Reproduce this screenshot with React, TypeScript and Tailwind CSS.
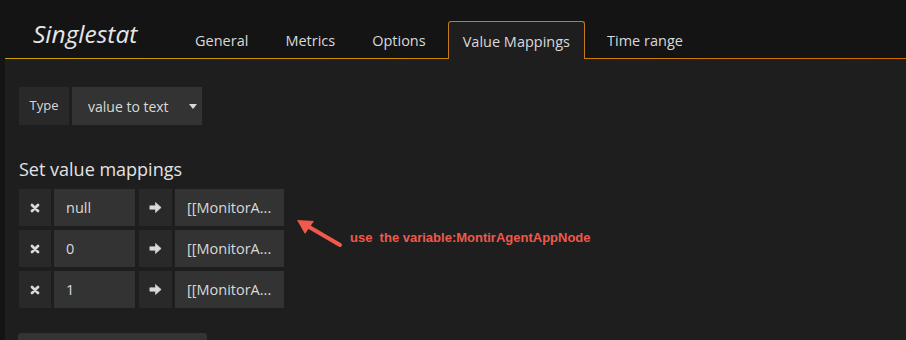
import React from 'react';

const tabs = ['General', 'Metrics', 'Options', 'Value Mappings', 'Time range'];
const mappings = ['null', '0', '1'];

const Arrow = () => (
  <svg width="13" height="13" viewBox="0 0 12 12" className="text-[#d8d9da]">
    <path d="M0.8 4.4h5.2V1.3L11.2 6 6 10.7V7.6H0.8z" fill="currentColor" strokeLinejoin="round" stroke="currentColor" strokeWidth="0.6" />
  </svg>
);

const Cross = () => (
  <svg width="10" height="10" viewBox="0 0 10 10" className="text-[#d8d9da]">
    <path d="M2 2l6 6M8 2L2 8" stroke="currentColor" strokeWidth="2.8" strokeLinecap="round" />
  </svg>
);

export default function App() {
  return (
    <div className="w-[906px] h-[340px] overflow-hidden bg-[#141414] relative" style={{ fontFamily: '"Open Sans", "Noto Sans", sans-serif' }}>
      {/* Header with tabs */}
      <div className="flex items-end h-[59px] pl-[5px]">
        <div className="flex items-end w-full h-[38px] relative">
          <div className="absolute left-0 right-0 bottom-0 h-px bg-gradient-to-r from-[#c9a000] to-[#d26a00]" />
          <div className="pl-[28px] w-[175px] text-[24.5px] italic text-[#e6e6e6] leading-none pb-[13px] self-end">
            Singlestat
          </div>
          <div className="flex items-end gap-[7px]">
            {tabs.map((t) => {
              const active = t === 'Value Mappings';
              return (
                <div
                  key={t}
                  className={`relative z-10 h-[38px] px-[14px] flex items-center text-[14.5px] text-[#d8d9da] ${
                    active ? 'bg-[#1f1e1f] border border-b-0 border-[#c47a1e] rounded-t-[3px]' : 'border border-transparent'
                  }`}
                >
                  <span className="pt-[2px]">{t}</span>
                </div>
              );
            })}
          </div>
        </div>
      </div>

      {/* Panel body */}
      <div className="ml-[5px] h-[281px] bg-[#1f1e1f] pl-[14px] pt-[28px]">
        <div className="flex gap-[3px] h-[38px]">
          <div className="w-[50px] bg-[#292929] flex items-center justify-center text-[13px] text-[#d8d9da]">Type</div>
          <div className="w-[130px] bg-[#333333] flex items-center pl-[16px] pr-[5px] text-[14px] text-[#d8d9da]">
            <span className="flex-1">value to text</span>
            <span className="w-0 h-0 border-l-[4px] border-r-[4px] border-t-[5px] border-l-transparent border-r-transparent border-t-[#d8d9da]" />
          </div>
        </div>

        <div className="mt-[33px] text-[18px] leading-[22px] text-[#e3e3e3]">Set value mappings</div>

        <div className="mt-[9px] flex flex-col gap-[4px]">
          {mappings.map((m) => (
            <div key={m} className="flex h-[37px]">
              <div className="w-[32px] bg-[#292929] flex items-center justify-center">
                <Cross />
              </div>
              <div className="ml-[3px] w-[81px] bg-[#333333] flex items-center pl-[12px] text-[14.5px] text-[#d8d9da]">{m}</div>
              <div className="ml-[4px] w-[33px] bg-[#292929] flex items-center justify-center">
                <Arrow />
              </div>
              <div className="ml-[3px] w-[109px] bg-[#333333] flex items-center pl-[12px] text-[14.5px] text-[#d8d9da] whitespace-nowrap overflow-hidden">
                [[MonitorA...
              </div>
            </div>
          ))}
        </div>

        <div className="mt-[25px] ml-[-1px] w-[189px] h-[20px] bg-[#333333] rounded-t-[3px]" />
      </div>

      {/* Annotation */}
      <svg className="absolute left-[292px] top-[215px]" width="56" height="36" viewBox="0 0 56 36">
        <line x1="48" y1="30" x2="12" y2="9" stroke="#f05a4c" strokeWidth="4" strokeLinecap="round" />
        <polygon points="5,5 22,6 13,19" fill="#f05a4c" />
      </svg>
      <div
        className="absolute left-[350px] top-[231px] text-[13px] font-bold text-[#ec5a4c] whitespace-pre leading-none"
        style={{ fontFamily: '"Liberation Sans", Arial, sans-serif' }}
      >
        use  the variable:MontirAgentAppNode
      </div>
    </div>
  );
}
